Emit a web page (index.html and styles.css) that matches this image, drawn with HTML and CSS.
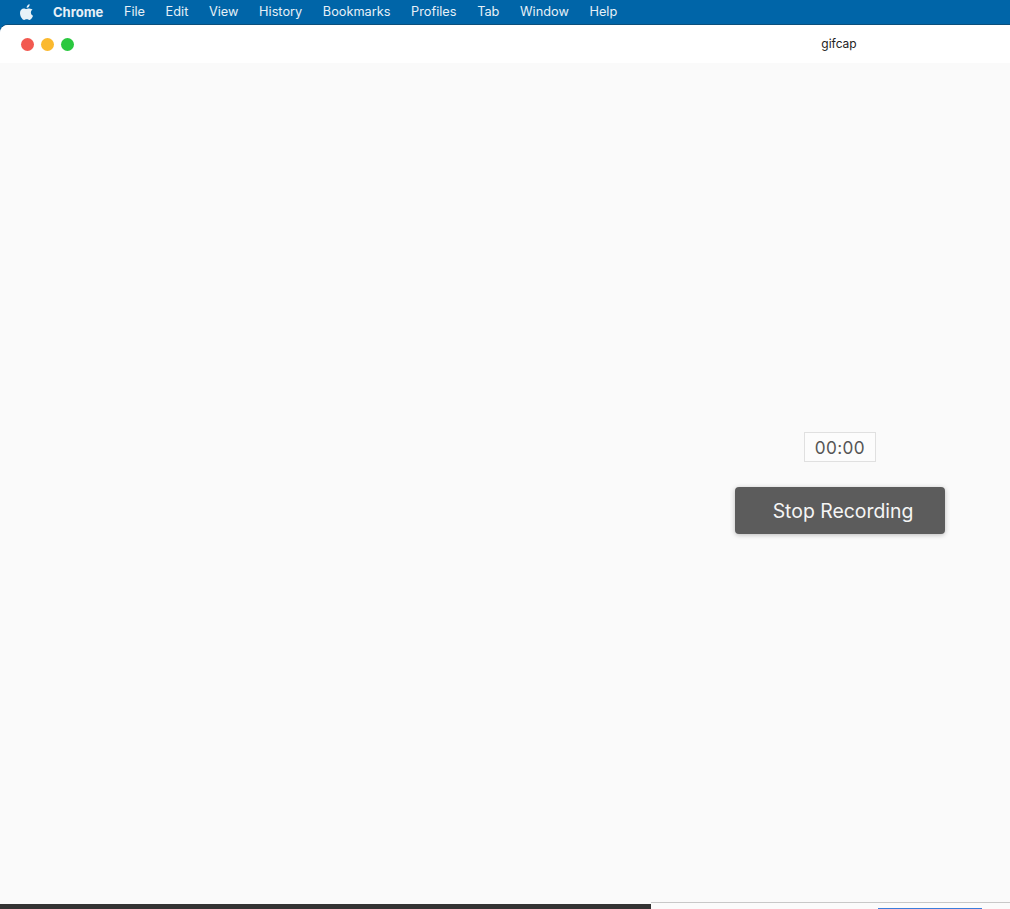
FILE: index.html
```html
<!DOCTYPE html>
<html lang="en">
<head>
<meta charset="utf-8">
<title>gifcap</title>
<link rel="stylesheet" href="styles.css">
</head>
<body>
<header class="menubar">
  <svg class="apple" viewBox="0 0 814 1000" aria-hidden="true"><path d="M788 341c-6 4-108 62-108 190 0 148 130 200 134 202-1 3-21 72-69 142-43 62-88 124-156 124s-86-40-165-40c-77 0-104 41-166 41s-106-57-156-127C44 791 0 671 0 557c0-183 119-280 236-280 62 0 114 41 153 41 37 0 95-43 166-43 27 0 124 2 233 66zM554 170c29-35 50-83 50-131 0-7-1-13-2-19-48 2-104 32-138 71-27 30-52 78-52 127 0 7 1 15 2 17 3 1 8 1 13 1 43 0 97-29 127-66z"/></svg>
  <nav class="menus">
    <span class="menu strong">Chrome</span>
    <span class="menu">File</span>
    <span class="menu">Edit</span>
    <span class="menu">View</span>
    <span class="menu">History</span>
    <span class="menu">Bookmarks</span>
    <span class="menu">Profiles</span>
    <span class="menu">Tab</span>
    <span class="menu">Window</span>
    <span class="menu">Help</span>
  </nav>
</header>
<div class="window">
  <div class="titlebar">
    <div class="lights">
      <span class="light red"></span>
      <span class="light amber"></span>
      <span class="light green"></span>
    </div>
    <div class="title">gifcap</div>
  </div>
  <main class="content">
    <section class="recorder">
      <div class="timer">00:00</div>
      <button class="stop" type="button">Stop Recording</button>
    </section>
  </main>
</div>
<footer class="strip">
  <div class="strip-dark"></div>
  <div class="strip-light"><span class="strip-bar"></span></div>
</footer>
</body>
</html>
```

FILE: styles.css
```css
* { box-sizing: border-box; }
html, body { margin: 0; height: 100%; }
body {
  height: 909px;
  overflow: hidden;
  display: flex;
  flex-direction: column;
  background: #0064a6;
  font-family: Inter, "Liberation Sans", sans-serif;
}
.menubar {
  height: 25px;
  flex: none;
  display: flex;
  align-items: center;
  padding-left: 20px;
  background: #0065a8;
  color: #e6f0f7;
}
.apple { width: 13px; height: 16px; fill: #e8f2f8; flex: none; margin-top: -2px; }
.menus { display: flex; gap: 20.6px; margin-left: 20px; margin-top: -2px; }
.menu { font-size: 12.75px; line-height: 16px; white-space: nowrap; }
.strong { font-weight: 700; font-size: 13px; }
.window {
  flex: 1;
  min-height: 0;
  display: flex;
  flex-direction: column;
  border-radius: 8px 0 0 0;
  overflow: hidden;
  background: #fafafa;
  box-shadow: 0 -1px 0 #0b4f7c;
}
.titlebar {
  height: 38px;
  flex: none;
  display: grid;
  grid-template-columns: 670px 338px;
  align-items: center;
  background: #fff;
}
.lights { display: flex; gap: 7px; padding-left: 21px; }
.light { width: 13px; height: 13px; border-radius: 50%; }
.red { background: #f25950; }
.amber { background: #fbb92e; }
.green { background: #2ac83f; }
.title { text-align: center; font-size: 12px; line-height: 14px; color: #222; }
.content {
  flex: 1;
  min-height: 0;
  display: flex;
  justify-content: flex-end;
  align-items: center;
  padding-bottom: 2px;
  background: #fafafa;
}
.recorder {
  width: 340px;
  display: flex;
  flex-direction: column;
  align-items: center;
  gap: 25px;
}
.timer {
  width: 72px;
  height: 30px;
  display: flex;
  align-items: center;
  justify-content: flex-end;
  padding: 2px 10px 0 0;
  border: 1px solid #e0e0e0;
  background: #fcfcfc;
  font-size: 17.2px;
  letter-spacing: 0.4px;
  color: #555;
}
.stop {
  width: 210px;
  height: 47px;
  border: 0;
  border-radius: 4px;
  background: #5c5c5c;
  color: #f5f5f5;
  font-family: inherit;
  font-size: 19.4px;
  box-shadow: 0 1px 5px rgba(0, 0, 0, 0.25);
  padding: 2px 0 0 6px;
}
.strip {
  height: 5px;
  flex: none;
  display: flex;
}
.strip-dark { width: 651px; background: #333; }
.strip-light {
  flex: 1;
  height: 7px;
  margin-top: -2px;
  background: #fbfbfb;
  border-top: 1px solid #c8c8c8;
  padding: 5px 28px 0 227px;
}
.strip-bar { display: block; height: 1px; background: #3b7ddb; }
```
